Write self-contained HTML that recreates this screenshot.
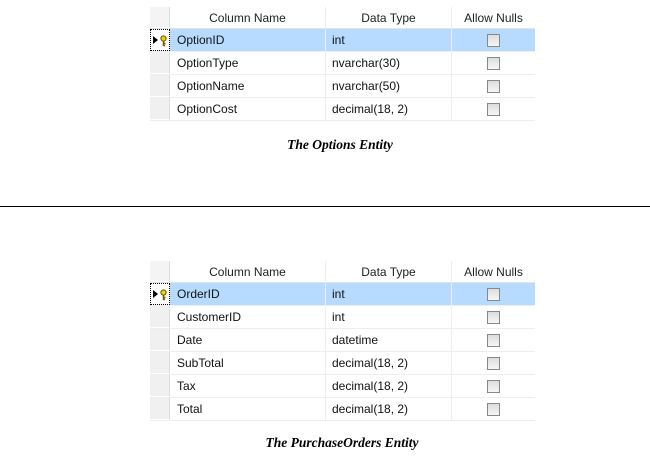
<!DOCTYPE html><html><head><style>
body{margin:0;width:650px;height:459px;background:#fff;position:relative;font-family:"Liberation Sans","DejaVu Sans",sans-serif;overflow:hidden}
.t{position:absolute;left:150px;width:385px}
.r{position:relative;height:23px;border-bottom:1px solid #eee;box-sizing:border-box;font-size:12px;color:#111}
.h{height:22px;border-bottom:1px solid #e4e4e4;color:#222}
.r div{position:absolute;top:0;height:100%;line-height:22px;box-sizing:border-box}
.s{left:0;width:20px;background:#f0f0f0;border-right:1px solid #ddd;border-bottom:1px solid #fff}
.h .s{background:#f4f4f4}
.c1{left:20px;width:156px;padding-left:7px;border-right:1px solid #eee}
.c2{left:176px;width:126px;padding-left:6px;border-right:1px solid #eee}
.c3{left:302px;width:83px}
.h .c1,.h .c2,.h .c3{text-align:center;padding-left:0}
.sel .c1,.sel .c2,.sel .c3{background:#b7dbff}
.sel .s{background:#fff;border:1px dotted #000}
.cb{position:absolute;left:35px;top:5px;width:11px;height:11px;border:1px solid #888;background:linear-gradient(#ddd,#f6f6f6)}
.cap{position:absolute;width:650px;text-align:center;font-family:"Liberation Serif",serif;font-style:italic;font-weight:bold;font-size:13.5px}
.key{position:absolute;left:1px;top:5px}
</style></head><body>
<svg width="0" height="0" style="position:absolute"><defs><g id="k"><path d="M1 1 L6 5 L1 9Z" fill="#000"/><circle cx="11.5" cy="3.5" r="2.6" fill="#f0d000" stroke="#6a5a00" stroke-width="1"/><path d="M11.5 6 V11 M11.5 8.5 H13.5 M11.5 10.5 H13" stroke="#6a5a00" stroke-width="1.5"/></g></defs></svg>
<div class="t" style="top:7px">
<div class="r h"><div class="s"></div><div class="c1">Column Name</div><div class="c2">Data Type</div><div class="c3">Allow Nulls</div></div>
<div class="r sel"><div class="s"><svg class="key" width="16" height="12"><use href="#k"/></svg></div><div class="c1">OptionID</div><div class="c2">int</div><div class="c3"><span class="cb"></span></div></div>
<div class="r"><div class="s"></div><div class="c1">OptionType</div><div class="c2">nvarchar(30)</div><div class="c3"><span class="cb"></span></div></div>
<div class="r"><div class="s"></div><div class="c1">OptionName</div><div class="c2">nvarchar(50)</div><div class="c3"><span class="cb"></span></div></div>
<div class="r"><div class="s"></div><div class="c1">OptionCost</div><div class="c2">decimal(18, 2)</div><div class="c3"><span class="cb"></span></div></div>
</div>
<div class="cap" style="top:137px;left:15px">The Options Entity</div>
<div style="position:absolute;left:0;top:206px;width:650px;height:1px;background:#000"></div>
<div class="t" style="top:261px">
<div class="r h"><div class="s"></div><div class="c1">Column Name</div><div class="c2">Data Type</div><div class="c3">Allow Nulls</div></div>
<div class="r sel"><div class="s"><svg class="key" width="16" height="12"><use href="#k"/></svg></div><div class="c1">OrderID</div><div class="c2">int</div><div class="c3"><span class="cb"></span></div></div>
<div class="r"><div class="s"></div><div class="c1">CustomerID</div><div class="c2">int</div><div class="c3"><span class="cb"></span></div></div>
<div class="r"><div class="s"></div><div class="c1">Date</div><div class="c2">datetime</div><div class="c3"><span class="cb"></span></div></div>
<div class="r"><div class="s"></div><div class="c1">SubTotal</div><div class="c2">decimal(18, 2)</div><div class="c3"><span class="cb"></span></div></div>
<div class="r"><div class="s"></div><div class="c1">Tax</div><div class="c2">decimal(18, 2)</div><div class="c3"><span class="cb"></span></div></div>
<div class="r"><div class="s"></div><div class="c1">Total</div><div class="c2">decimal(18, 2)</div><div class="c3"><span class="cb"></span></div></div>
</div>
<div class="cap" style="top:435px;left:17px">The PurchaseOrders Entity</div>
</body></html>
